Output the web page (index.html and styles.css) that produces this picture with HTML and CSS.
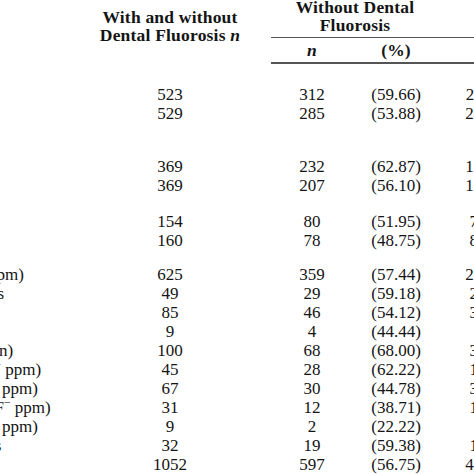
FILE: index.html
```html
<!DOCTYPE html>
<html lang="en">
<head>
<meta charset="utf-8">
<title>Dental fluorosis table</title>
<link rel="stylesheet" href="styles.css">
</head>
<body>
<div class="crop">
  <table class="tbl">
    <colgroup>
      <col class="c0"><col class="c1"><col class="c2"><col class="c3"><col class="c4"><col class="c5">
    </colgroup>
    <thead>
      <tr class="ha">
        <th rowspan="2" class="lab-h">Variable</th>
        <th rowspan="2" class="tot-h">With and without<br>Dental Fluorosis <i>n</i></th>
        <th colspan="2" class="grp">Without Dental<br>Fluorosis</th>
        <th colspan="2" class="grp">With Dental<br>Fluorosis</th>
      </tr>
      <tr class="hb">
        <th><i>n</i></th>
        <th>(%)</th>
        <th><i>n</i> (%)</th>
        <th>OR (95% CI)</th>
      </tr>
    </thead>
    <tbody>
      <tr class="s1"><td class="lab">Sex</td><td></td><td></td><td></td><td></td><td></td></tr>
      <tr><td class="lab">Male</td><td>523</td><td>312</td><td>(59.66)</td><td>211 (40.34)</td><td>1.00</td></tr>
      <tr><td class="lab">Female</td><td>529</td><td>285</td><td>(53.88)</td><td>244 (46.12)</td><td>1.26</td></tr>
      <tr class="s2"><td class="lab">Age group<br>(years)</td><td></td><td></td><td></td><td></td><td></td></tr>
      <tr><td class="lab">12–13</td><td>369</td><td>232</td><td>(62.87)</td><td>137 (37.13)</td><td>1.00</td></tr>
      <tr><td class="lab">14–15</td><td>369</td><td>207</td><td>(56.10)</td><td>162 (43.90)</td><td>1.33</td></tr>
      <tr class="s3"><td class="lab">Fluoridated salt use</td><td></td><td></td><td></td><td></td><td></td></tr>
      <tr><td class="lab">Yes</td><td>154</td><td>80</td><td>(51.95)</td><td>74 (48.05)</td><td>1.00</td></tr>
      <tr><td class="lab">No</td><td>160</td><td>78</td><td>(48.75)</td><td>82 (51.25)</td><td>1.14</td></tr>
      <tr class="s4"><td class="lab">Drinking water source</td><td></td><td></td><td></td><td></td><td></td></tr>
      <tr><td class="lab">Piped water (&lt; 0.70 F<sup class="sm">−</sup> ppm)</td><td>625</td><td>359</td><td>(57.44)</td><td>266 (42.56)</td><td>1.00</td></tr>
      <tr><td class="lab">Bottled or purified waters</td><td>49</td><td>29</td><td>(59.18)</td><td>20 (40.82)</td><td>0.93</td></tr>
      <tr><td class="lab">Filtered water</td><td>85</td><td>46</td><td>(54.12)</td><td>39 (45.88)</td><td>1.14</td></tr>
      <tr><td class="lab">Other sources</td><td>9</td><td>4</td><td>(44.44)</td><td>5 (55.56)</td><td>1.69</td></tr>
      <tr><td class="lab">Unknown (no fluoridation)</td><td>100</td><td>68</td><td>(68.00)</td><td>32 (32.00)</td><td>0.63</td></tr>
      <tr><td class="lab">Well water (0.91–1.20 F<sup class="sm">−</sup> ppm)</td><td>45</td><td>28</td><td>(62.22)</td><td>17 (37.78)</td><td>0.82</td></tr>
      <tr><td class="lab">Spring water (0.5–1.0 F<sup class="sm">−</sup> ppm)</td><td>67</td><td>30</td><td>(44.78)</td><td>37 (55.22)</td><td>1.66</td></tr>
      <tr><td class="lab">Well water (&gt;1.50–2.00 F<sup class="sm">−</sup>  ppm)</td><td>31</td><td>12</td><td>(38.71)</td><td>19 (61.29)</td><td>2.14</td></tr>
      <tr><td class="lab">Spring water (1.0–1.5 F<sup class="sm">−</sup> ppm)</td><td>9</td><td>2</td><td>(22.22)</td><td>7 (77.78)</td><td>4.72</td></tr>
      <tr><td class="lab">Mixed or various sources</td><td>32</td><td>19</td><td>(59.38)</td><td>13 (40.62)</td><td>0.92</td></tr>
      <tr><td class="lab">Total</td><td>1052</td><td>597</td><td>(56.75)</td><td>455 (43.25)</td><td></td></tr>
    </tbody>
  </table>
</div>
</body>
</html>
```

FILE: styles.css
```css
html, body {
  margin: 0;
  padding: 0;
  background: #ffffff;
}

.crop {
  width: 474px;
  height: 474px;
  overflow: hidden;
  background: #ffffff;
}

.tbl {
  border-collapse: collapse;
  table-layout: fixed;
  width: 941px;
  margin: -2px 0 0 -180px;
  font-family: "Liberation Serif", "Times New Roman", serif;
  font-size: 17px;
  color: #141414;
}

.c0 { width: 249px; }
.c1 { width: 202px; }
.c2 { width: 82px; }
.c3 { width: 86px; }
.c4 { width: 132px; }
.c5 { width: 190px; }

.tbl th,
.tbl td {
  padding: 0;
}

.tbl thead th {
  font-weight: bold;
  font-size: 17.5px;
  letter-spacing: 0.2px;
  line-height: 18px;
  text-align: center;
  vertical-align: top;
}

.tbl thead i {
  font-style: italic;
}

.ha .grp {
  padding-bottom: 3px;
  border-bottom: 1px solid #555555;
}

.ha .tot-h {
  padding-top: 10px;
}

.ha .lab-h {
  text-align: left;
  padding-left: 9px;
  padding-top: 10px;
}

.hb th {
  padding: 3px 0;
  border-bottom: 2px solid #555555;
}

.tbl tbody td {
  height: 19px;
  line-height: 19px;
  text-align: center;
  vertical-align: middle;
  white-space: nowrap;
}

.tbl tbody td.lab {
  text-align: left;
  padding-left: 9px;
}

.tbl tbody .s1 td {
  height: 20.5px;
}

.tbl tbody .s2 td {
  height: 34px;
  line-height: 17px;
}

.tbl tbody .s3 td {
  height: 17px;
  line-height: 17px;
}

.tbl tbody .s4 td {
  height: 15px;
  line-height: 15px;
}

.sm {
  font-size: 0.7em;
  line-height: 0;
  vertical-align: 0.55em;
}
```
